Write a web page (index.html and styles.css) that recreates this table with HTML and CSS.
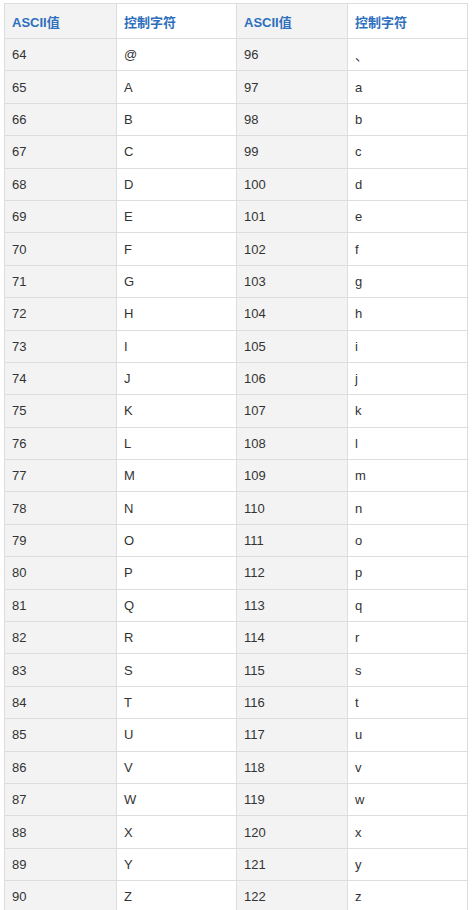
FILE: index.html
```html
<!DOCTYPE html>
<html lang="zh">
<head>
<meta charset="utf-8">
<link rel="stylesheet" href="styles.css">
</head>
<body>
<table class="ascii">
<colgroup><col class="c1"><col class="c2"><col class="c3"><col class="c4"></colgroup>
<thead>
<tr><th class="num">ASCII值</th><th>控制字符</th><th class="num">ASCII值</th><th>控制字符</th></tr>
</thead>
<tbody>
<tr><td class="num">64</td><td>@</td><td class="num">96</td><td>、</td></tr>
<tr><td class="num">65</td><td>A</td><td class="num">97</td><td>a</td></tr>
<tr><td class="num">66</td><td>B</td><td class="num">98</td><td>b</td></tr>
<tr><td class="num">67</td><td>C</td><td class="num">99</td><td>c</td></tr>
<tr><td class="num">68</td><td>D</td><td class="num">100</td><td>d</td></tr>
<tr><td class="num">69</td><td>E</td><td class="num">101</td><td>e</td></tr>
<tr><td class="num">70</td><td>F</td><td class="num">102</td><td>f</td></tr>
<tr><td class="num">71</td><td>G</td><td class="num">103</td><td>g</td></tr>
<tr><td class="num">72</td><td>H</td><td class="num">104</td><td>h</td></tr>
<tr><td class="num">73</td><td>I</td><td class="num">105</td><td>i</td></tr>
<tr><td class="num">74</td><td>J</td><td class="num">106</td><td>j</td></tr>
<tr><td class="num">75</td><td>K</td><td class="num">107</td><td>k</td></tr>
<tr><td class="num">76</td><td>L</td><td class="num">108</td><td>l</td></tr>
<tr><td class="num">77</td><td>M</td><td class="num">109</td><td>m</td></tr>
<tr><td class="num">78</td><td>N</td><td class="num">110</td><td>n</td></tr>
<tr><td class="num">79</td><td>O</td><td class="num">111</td><td>o</td></tr>
<tr><td class="num">80</td><td>P</td><td class="num">112</td><td>p</td></tr>
<tr><td class="num">81</td><td>Q</td><td class="num">113</td><td>q</td></tr>
<tr><td class="num">82</td><td>R</td><td class="num">114</td><td>r</td></tr>
<tr><td class="num">83</td><td>S</td><td class="num">115</td><td>s</td></tr>
<tr><td class="num">84</td><td>T</td><td class="num">116</td><td>t</td></tr>
<tr><td class="num">85</td><td>U</td><td class="num">117</td><td>u</td></tr>
<tr><td class="num">86</td><td>V</td><td class="num">118</td><td>v</td></tr>
<tr><td class="num">87</td><td>W</td><td class="num">119</td><td>w</td></tr>
<tr><td class="num">88</td><td>X</td><td class="num">120</td><td>x</td></tr>
<tr><td class="num">89</td><td>Y</td><td class="num">121</td><td>y</td></tr>
<tr><td class="num">90</td><td>Z</td><td class="num">122</td><td>z</td></tr>
</tbody>
</table>
</body>
</html>
```
FILE: styles.css
```css
html, body {
  background: #ffffff;
}
body {
  margin: 3px 0 0 4px;
  font-family: "Liberation Sans", Arial, "Noto Sans CJK SC", sans-serif;
  font-size: 13px;
  color: #333333;
}
.ascii {
  border-collapse: collapse;
  table-layout: fixed;
  width: 463px;
}
.c1 { width: 112px; }
.c2 { width: 120px; }
.c3 { width: 111px; }
.c4 { width: 120px; }
.ascii th, .ascii td {
  border: 1px solid #dddddd;
  text-align: left;
  padding: 0 0 0 7px;
  vertical-align: middle;
}
.ascii th {
  height: 34px;
  color: #2e6fbd;
  font-weight: bold;
  font-size: 13px;
}
.ascii td {
  height: 31.4px;
}
.ascii .num {
  background: #f3f3f3;
}
```
